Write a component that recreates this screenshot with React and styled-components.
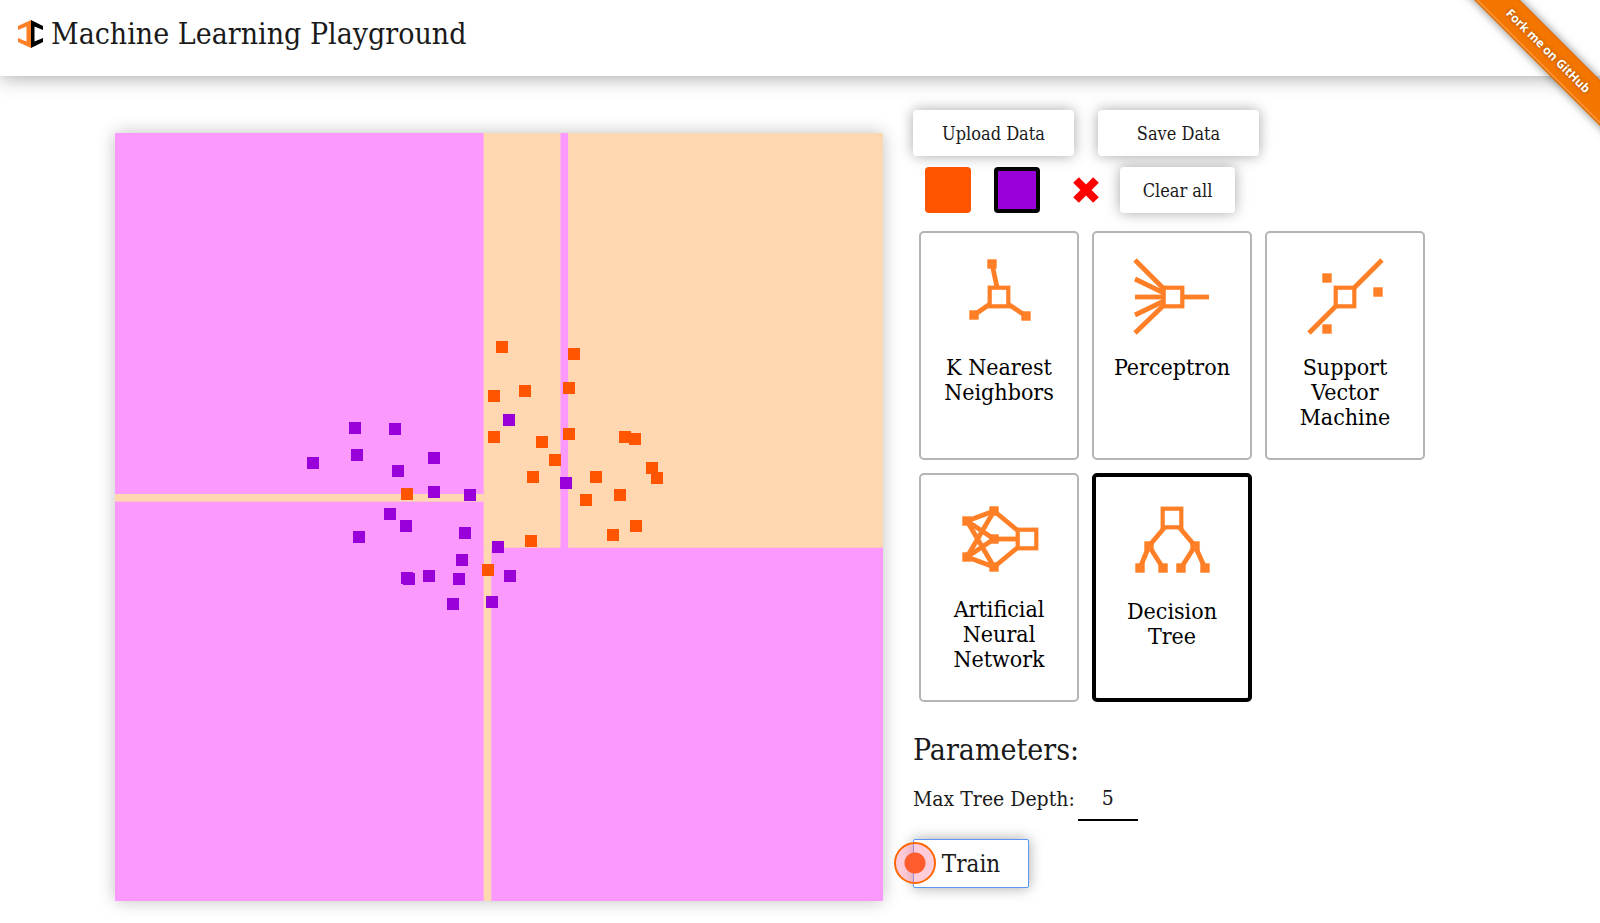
import { useState } from "react";
import styled, { createGlobalStyle, css } from "styled-components";

const BOARD = 768;
const TILE = BOARD / 100;

// [column, row, width, height] in tiles
const ORANGE_REGIONS = [
    [48, 0, 10, 54],
    [59, 0, 41, 54],
    [0, 47, 48, 1],
    [48, 54, 1, 46],
];

const ORANGE_POINTS = [
    [387, 214],
    [459, 221],
    [379, 263],
    [410, 258],
    [454, 255],
    [379, 304],
    [427, 309],
    [454, 301],
    [510, 304],
    [520, 306],
    [440, 327],
    [418, 344],
    [481, 344],
    [537, 335],
    [542, 345],
    [471, 367],
    [505, 362],
    [416, 408],
    [498, 402],
    [521, 393],
    [373, 437],
    [292, 361],
];

const PURPLE_POINTS = [
    [240, 295],
    [280, 296],
    [242, 322],
    [198, 330],
    [283, 338],
    [319, 325],
    [319, 359],
    [355, 362],
    [275, 381],
    [291, 393],
    [244, 404],
    [350, 400],
    [347, 427],
    [292, 445],
    [294, 446],
    [314, 443],
    [344, 446],
    [338, 471],
    [377, 469],
    [394, 287],
    [451, 350],
    [383, 414],
    [395, 443],
];

const MODELS = [
    {
        name: "K Nearest Neighbors",
        lines: [[33, 7, 38, 30], [15, 58, 31, 47], [67, 59, 49, 47]],
        dots: [[33, 7], [15, 58], [67, 59]],
        box: [40, 40],
    },
    {
        name: "Perceptron",
        lines: [[3, 3, 32, 32], [3, 22, 32, 36], [3, 40, 32, 40], [3, 58, 32, 44], [3, 76, 32, 48], [50, 40, 77, 40]],
        dots: [],
        box: [41, 40],
    },
    {
        name: "Support Vector Machine",
        lines: [[4, 76, 32, 48], [48, 32, 77, 3]],
        dots: [[22, 21], [73, 35], [22, 72]],
        box: [40, 40],
    },
    {
        name: "Artificial Neural Network",
        lines: [
            [8, 22, 35, 12],
            [8, 22, 35, 40],
            [8, 22, 35, 68],
            [8, 58, 35, 12],
            [8, 58, 35, 40],
            [8, 58, 35, 68],
            [35, 12, 58, 31],
            [35, 40, 58, 40],
            [35, 68, 58, 49],
        ],
        dots: [[8, 22], [8, 58], [35, 12], [35, 40], [35, 68]],
        box: [68, 40],
    },
    {
        name: "Decision Tree",
        lines: [
            [33, 26, 17, 45],
            [47, 26, 63, 45],
            [17, 45, 8, 67],
            [17, 45, 31, 67],
            [63, 45, 49, 67],
            [63, 45, 73, 67],
        ],
        dots: [[17, 45], [63, 45], [8, 67], [31, 67], [49, 67], [73, 67]],
        box: [40, 17],
    },
];

const Logo = () => (
    <svg width="26" height="28" viewBox="0 0 26 28" aria-hidden="true">
        <path fill="#ff7f27" d="M13 0 L0 6 V10 L8.5 6.5 V21.5 L0 18 V22 L13 28 Z" />
        <path fill="#000" d="M13 0 L25 6 V10 L16.5 6.5 V21.5 L25 18 V22 L13 28 Z" />
    </svg>
);

const ModelIcon = ({ model }) => {
    const [bx, by] = model.box;

    return (
        <svg width="80" height="80" viewBox="0 0 80 80" aria-hidden="true">
            {model.lines.map(([x1, y1, x2, y2], idx) => (
                <line key={idx} x1={x1} y1={y1} x2={x2} y2={y2} stroke="#ff7f27" strokeWidth="4.8" />
            ))}
            {model.dots.map(([x, y], idx) => (
                <rect key={idx} x={x - 4.7} y={y - 4.7} width="9.4" height="9.4" fill="#ff7f27" />
            ))}
            <rect x={bx - 9.3} y={by - 9.3} width="18.6" height="18.6" fill="#fff" stroke="#ff7f27" strokeWidth="4.2" />
        </svg>
    );
};

const Board = () => (
    <BoardSvg viewBox={`0 0 ${BOARD} ${BOARD}`} role="img" aria-label="Training data">
        <rect width={BOARD} height={BOARD} fill="#fb99ff" />
        {ORANGE_REGIONS.map(([x, y, w, h], idx) => (
            <rect key={idx} x={x * TILE} y={y * TILE} width={w * TILE} height={h * TILE} fill="#ffd8b1" />
        ))}
        {ORANGE_POINTS.map(([x, y], idx) => (
            <rect key={idx} x={x - 6} y={y - 6} width="12" height="12" fill="#ff5500" />
        ))}
        {PURPLE_POINTS.map(([x, y], idx) => (
            <rect key={idx} x={x - 6} y={y - 6} width="12" height="12" fill="#9900d9" />
        ))}
    </BoardSvg>
);

const App = () => {
    const [tool, setTool] = useState("purple");
    const [selected, setSelected] = useState("Decision Tree");
    const [depth, setDepth] = useState("5");

    return (
        <>
            <GlobalStyle />
            <Header>
                <Logo />
                <Title>Machine Learning Playground</Title>
            </Header>
            <Ribbon href="#github">
                <RibbonBand>Fork me on GitHub</RibbonBand>
            </Ribbon>
            <Main>
                <Board />
                <Panel>
                    <FileRow>
                        <Button $wide>Upload Data</Button>
                        <Button $wide>Save Data</Button>
                    </FileRow>
                    <ToolRow>
                        <Swatch $color="#ff5500" $active={tool === "orange"} aria-label="Orange" onClick={() => setTool("orange")} />
                        <Swatch $color="#9900d9" $active={tool === "purple"} aria-label="Purple" onClick={() => setTool("purple")} />
                        <EraseButton aria-label="Erase" onClick={() => setTool("erase")}>
                            <svg width="26" height="26" viewBox="0 0 26 26" aria-hidden="true">
                                <path d="M3 3 L23 23 M23 3 L3 23" stroke="#ff0000" strokeWidth="8" />
                            </svg>
                        </EraseButton>
                        <Button>Clear all</Button>
                    </ToolRow>
                    <ModelGrid>
                        {MODELS.map((model) => (
                            <ModelCard key={model.name} $active={model.name === selected} onClick={() => setSelected(model.name)}>
                                <ModelIcon model={model} />
                                <ModelName>{model.name}</ModelName>
                            </ModelCard>
                        ))}
                    </ModelGrid>
                    <ParamsTitle>Parameters:</ParamsTitle>
                    <ParamRow>
                        <label htmlFor="depth">Max Tree Depth:</label>
                        <ParamInput id="depth" value={depth} onChange={(e) => setDepth(e.target.value)} />
                    </ParamRow>
                    <TrainButton>
                        Train
                        <ClickMark />
                    </TrainButton>
                </Panel>
            </Main>
        </>
    );
};

export default App;

const GlobalStyle = createGlobalStyle`
    * {
        box-sizing: border-box;
    }

    body {
        margin: 0;
        background-color: white;
        color: #1a1a1a;
        font-family: "Roboto Slab", "DejaVu Serif Condensed", "DejaVu Serif", serif;
    }

    button, input {
        font-family: inherit;
        color: inherit;
    }
`;

const Header = styled.header`
    display: flex;
    align-items: center;
    gap: 7px;
    height: 76px;
    padding: 0 18px 9px;

    background-color: white;
    box-shadow: 0 0 20px rgba(0, 0, 0, 0.4);
`;

const Title = styled.h1`
    margin: 0;
    font-size: 30px;
    font-weight: 300;
    line-height: 36px;
`;

const Ribbon = styled.a`
    position: absolute;
    top: 0;
    right: 0;
    width: 150px;
    height: 150px;
    overflow: hidden;
    pointer-events: none;
    text-decoration: none;
`;

const RibbonBand = styled.span`
    position: absolute;
    top: 35px;
    left: -22px;
    width: 240px;
    height: 32px;
    transform: rotate(45deg);
    pointer-events: auto;

    background-color: #f47600;
    border: 1px solid #dd6a00;
    box-shadow: 0 0 10px rgba(0, 0, 0, 0.5), inset 0 -2px 0 #ff9232;
    color: white;
    font-family: "Open Sans", "Noto Sans", sans-serif;
    font-size: 12px;
    font-weight: bold;
    line-height: 30px;
    text-align: center;
    text-shadow: 0 0 4px rgba(0, 0, 0, 0.4);
`;

const Main = styled.main`
    display: flex;
    align-items: flex-start;
    gap: 30px;
    padding: 34px 115px 20px;
`;

const BoardSvg = styled.svg`
    flex: none;
    width: 48vw;
    margin-top: 23px;
    box-shadow: 0 0 16px rgba(0, 0, 0, 0.25);
`;

const Panel = styled.section`
    flex: 1;
    min-width: 0;
`;

const FileRow = styled.div`
    display: flex;
    gap: 24px;
`;

const ToolRow = styled.div`
    display: flex;
    align-items: center;
    gap: 23px;
    margin-top: 11px;
    padding-left: 12px;
`;

const raised = css`
    border: none;
    background-color: white;
    box-shadow: 0 0 14px rgba(0, 0, 0, 0.35);
    cursor: pointer;
`;

const Button = styled.button`
    ${raised}
    width: ${({ $wide }) => ($wide ? "161px" : "115px")};
    height: 46px;
    padding: 0;
    border-radius: 4px;
    font-size: 18px;
`;

const Swatch = styled.button`
    width: 46px;
    height: 46px;
    padding: 0;
    border: 4px solid ${({ $active, $color }) => ($active ? "black" : $color)};
    border-radius: 4px;
    background-color: ${({ $color }) => $color};
    cursor: pointer;
`;

const EraseButton = styled.button`
    display: flex;
    align-items: center;
    justify-content: center;
    width: 46px;
    height: 46px;
    margin-right: -12px;
    padding: 0;
    border: none;
    background: none;
    cursor: pointer;
`;

const ModelGrid = styled.div`
    display: grid;
    grid-template-columns: repeat(auto-fill, 160px);
    gap: 13px;
    margin: 18px 0 0 6px;
`;

const ModelCard = styled.button`
    display: flex;
    flex-direction: column;
    align-items: center;
    height: 229px;
    padding: 24px 8px 8px;
    border: ${({ $active }) => ($active ? "4px solid black" : "2px solid #b4b4b4")};
    border-radius: 5px;
    background-color: white;
    color: black;
    cursor: pointer;
`;

const ModelName = styled.span`
    margin-top: 18px;
    font-size: 23px;
    line-height: 25px;
`;

const ParamsTitle = styled.h2`
    margin: 30px 0 0;
    font-size: 30px;
    font-weight: 300;
    line-height: 36px;
`;

const ParamRow = styled.div`
    display: flex;
    align-items: center;
    gap: 3px;
    margin-top: 9px;
    font-size: 21px;
`;

const ParamInput = styled.input`
    width: 60px;
    height: 44px;
    padding: 0;
    border: none;
    border-bottom: 2px solid black;
    background: none;
    font-size: 21px;
    text-align: center;
`;

const TrainButton = styled.button`
    ${raised}
    position: relative;
    width: 116px;
    height: 49px;
    margin-top: 18px;
    padding: 0;
    border: 1px solid #5b97f5;
    border-radius: 2px;
    font-size: 24px;
`;

// cursor highlight over the button's left edge
const ClickMark = styled.span`
    position: absolute;
    top: 2px;
    left: -20px;
    width: 42px;
    height: 42px;
    border: 2px solid #ff6600;
    border-radius: 50%;
    background: radial-gradient(circle, #ff5c2e 10px, rgba(255, 130, 160, 0.4) 11px);
`;
